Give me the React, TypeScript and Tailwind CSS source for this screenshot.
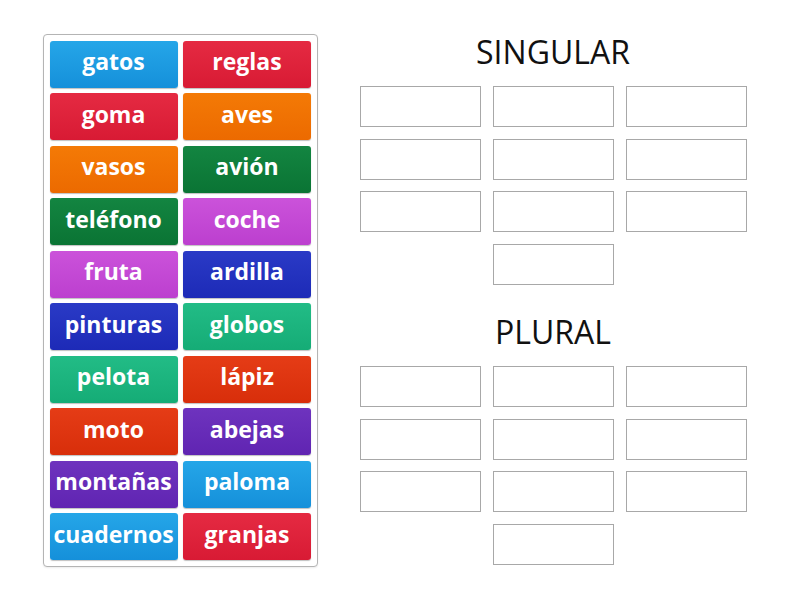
import React from "react";

type Tile = { t: string; c: string };

const tiles: Tile[] = [
  { t: "gatos", c: "blue" },
  { t: "reglas", c: "red" },
  { t: "goma", c: "red" },
  { t: "aves", c: "orange" },
  { t: "vasos", c: "orange" },
  { t: "avión", c: "green" },
  { t: "teléfono", c: "green" },
  { t: "coche", c: "magenta" },
  { t: "fruta", c: "magenta" },
  { t: "ardilla", c: "navy" },
  { t: "pinturas", c: "navy" },
  { t: "globos", c: "teal" },
  { t: "pelota", c: "teal" },
  { t: "lápiz", c: "redorange" },
  { t: "moto", c: "redorange" },
  { t: "abejas", c: "purple" },
  { t: "montañas", c: "purple" },
  { t: "paloma", c: "blue" },
  { t: "cuadernos", c: "blue" },
  { t: "granjas", c: "red" },
];

const colorClass: Record<string, string> = {
  blue: "bg-linear-to-b from-[#25a6e8] to-[#1590da]",
  red: "bg-linear-to-b from-[#e52a42] to-[#d81a34]",
  orange: "bg-linear-to-b from-[#f47a06] to-[#ec6a00]",
  green: "bg-linear-to-b from-[#138541] to-[#0a7434]",
  magenta: "bg-linear-to-b from-[#cb52da] to-[#bc3fcf]",
  navy: "bg-linear-to-b from-[#2a3ac6] to-[#1d2ab7]",
  teal: "bg-linear-to-b from-[#22bc86] to-[#15ac76]",
  redorange: "bg-linear-to-b from-[#e53c16] to-[#d82e0a]",
  purple: "bg-linear-to-b from-[#6e33be] to-[#6024b2]",
};

function Box() {
  return <div className="w-[121px] h-[41px] border border-[#a8a8a8] bg-white" />;
}

function Section({ title }: { title: string }) {
  return (
    <div className="flex flex-col items-center">
      <div className="text-[32px] leading-[40px] text-[#111] font-['Open_Sans',sans-serif]">
        {title}
      </div>
      <div className="mt-[14px] grid grid-cols-[121px_121px_121px] gap-x-[12px] gap-y-[11.7px]">
        {Array.from({ length: 9 }).map((_, i) => (
          <Box key={i} />
        ))}
        <div />
        <Box />
      </div>
    </div>
  );
}

export default function App() {
  return (
    <div className="w-[800px] h-[600px] bg-white flex font-['Open_Sans',sans-serif] overflow-hidden">
      <div className="ml-[43px] mt-[34px] self-start border border-[#b4b4b4] rounded-[4px] p-[5.5px] bg-white shadow-[0_1px_2px_rgba(0,0,0,0.08)]">
        <div className="grid grid-cols-[128px_128px] gap-x-[5.5px] gap-y-[5.5px]">
          {tiles.map((tile, i) => (
            <div
              key={i}
              className={`h-[47px] pb-[5px] rounded-[3px] flex items-center justify-center text-white font-bold text-[23px] leading-none whitespace-nowrap shadow-[0_1px_1px_rgba(0,0,0,0.25)] ${colorClass[tile.c]}`}
            >
              {tile.t}
            </div>
          ))}
        </div>
      </div>
      <div className="ml-[42px] mt-[32px] flex flex-col">
        <Section title="SINGULAR" />
        <div className="h-[27px]" />
        <Section title="PLURAL" />
      </div>
    </div>
  );
}
